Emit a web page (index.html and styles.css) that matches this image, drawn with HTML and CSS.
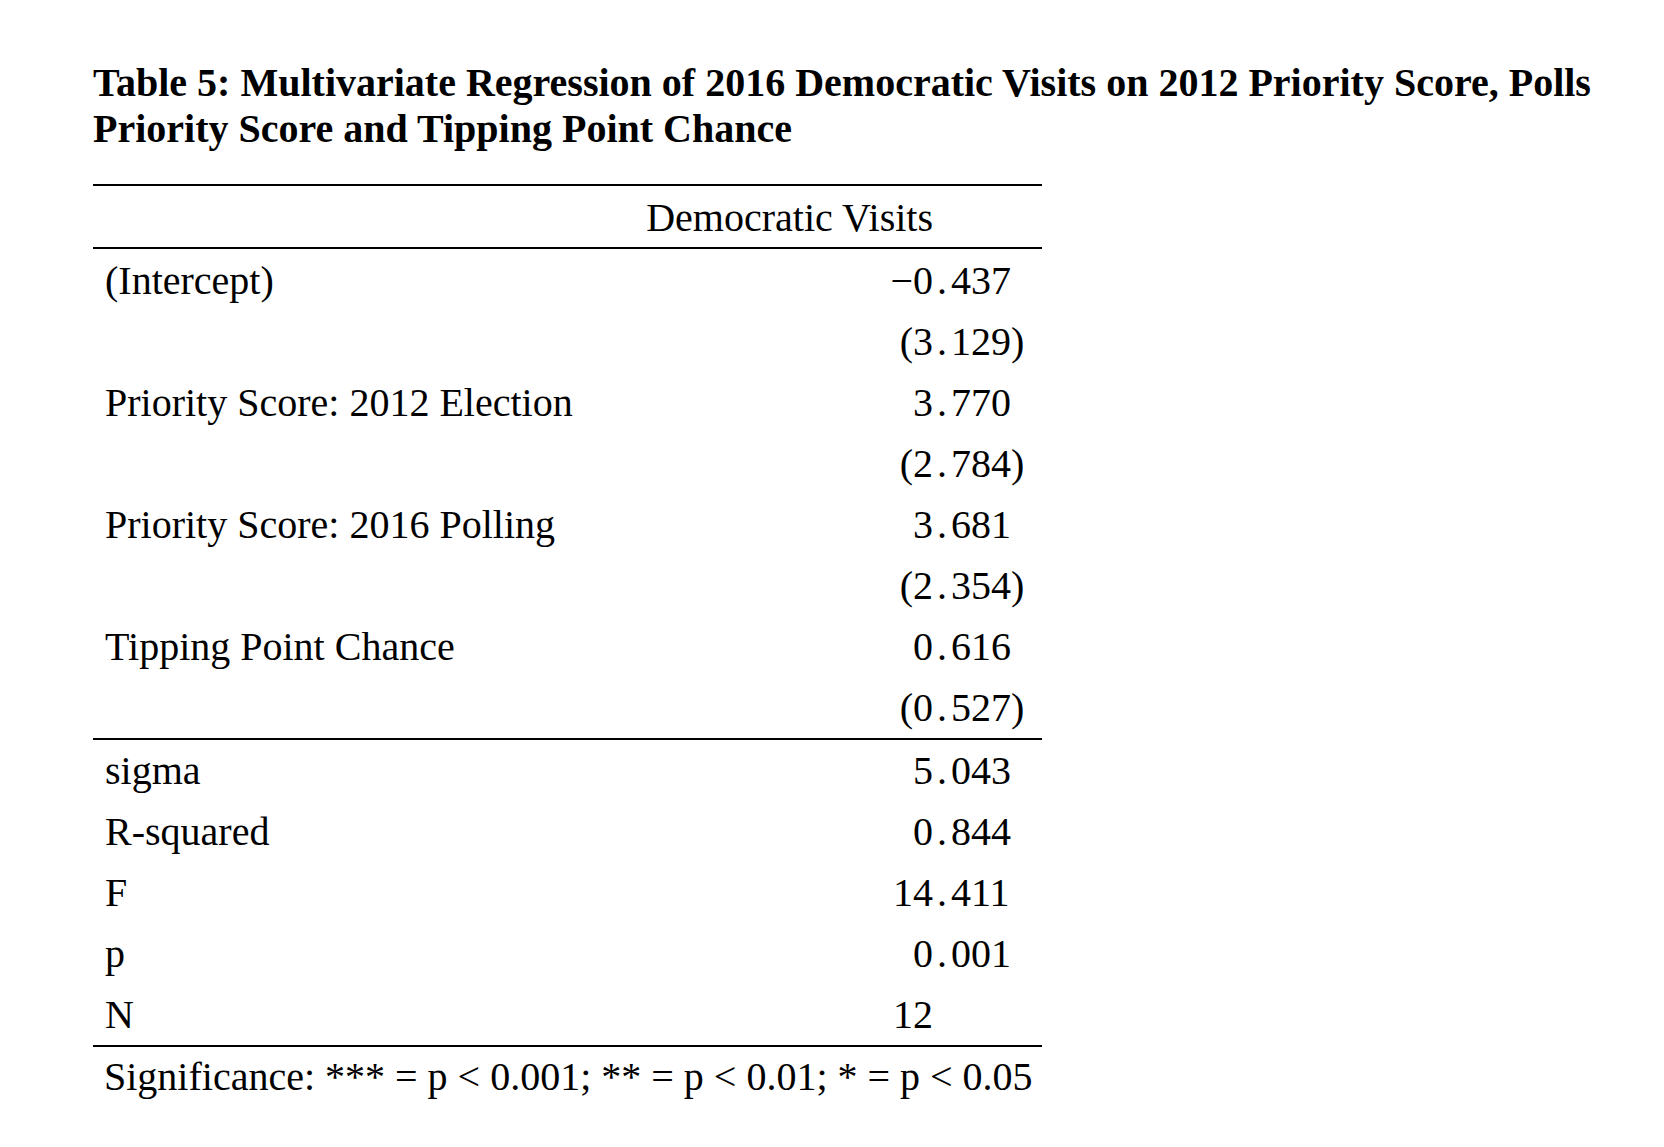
FILE: index.html
```html
<!DOCTYPE html>
<html lang="en">
<head>
<meta charset="utf-8">
<title>Table 5</title>
<link rel="stylesheet" href="styles.css">
</head>
<body>
<div class="page">
  <h1 class="caption">Table 5: Multivariate Regression of 2016 Democratic Visits on 2012 Priority Score, Polls Priority Score and Tipping Point Chance</h1>
  <div class="reg">
    <div class="head">
      <div class="hcell">Democratic Visits</div>
    </div>
    <div class="section coefs">
      <div class="row"><div class="lab">(Intercept)</div><div class="num"><span class="int">&minus;0</span><span class="dot">.</span><span class="frac">437</span></div></div>
      <div class="row"><div class="lab"></div><div class="num"><span class="int">(3</span><span class="dot">.</span><span class="frac">129)</span></div></div>
      <div class="row"><div class="lab">Priority Score: 2012 Election</div><div class="num"><span class="int">3</span><span class="dot">.</span><span class="frac">770</span></div></div>
      <div class="row"><div class="lab"></div><div class="num"><span class="int">(2</span><span class="dot">.</span><span class="frac">784)</span></div></div>
      <div class="row"><div class="lab">Priority Score: 2016 Polling</div><div class="num"><span class="int">3</span><span class="dot">.</span><span class="frac">681</span></div></div>
      <div class="row"><div class="lab"></div><div class="num"><span class="int">(2</span><span class="dot">.</span><span class="frac">354)</span></div></div>
      <div class="row"><div class="lab">Tipping Point Chance</div><div class="num"><span class="int">0</span><span class="dot">.</span><span class="frac">616</span></div></div>
      <div class="row"><div class="lab"></div><div class="num"><span class="int">(0</span><span class="dot">.</span><span class="frac">527)</span></div></div>
    </div>
    <div class="section stats">
      <div class="row"><div class="lab">sigma</div><div class="num"><span class="int">5</span><span class="dot">.</span><span class="frac">043</span></div></div>
      <div class="row"><div class="lab">R-squared</div><div class="num"><span class="int">0</span><span class="dot">.</span><span class="frac">844</span></div></div>
      <div class="row"><div class="lab">F</div><div class="num"><span class="int">14</span><span class="dot">.</span><span class="frac">411</span></div></div>
      <div class="row"><div class="lab">p</div><div class="num"><span class="int">0</span><span class="dot">.</span><span class="frac">001</span></div></div>
      <div class="row"><div class="lab">N</div><div class="num"><span class="int">12</span></div></div>
    </div>
    <div class="foot">Significance: *** = p &lt; 0.001; ** = p &lt; 0.01; * = p &lt; 0.05</div>
  </div>
</div>
</body>
</html>
```

FILE: styles.css
```css
html, body {
  margin: 0;
  padding: 0;
  background: #ffffff;
}

body {
  font-family: "Liberation Serif", "Times New Roman", serif;
  color: #000000;
}

.page {
  padding: 60px 40px 0 93px;
}

.caption {
  margin: 0;
  font-size: 40px;
  line-height: 46px;
  font-weight: bold;
}

.reg {
  width: 949px;
  margin-top: 32px;
  border-top: 2px solid #000;
  font-size: 40px;
}

.head {
  height: 59px;
  padding-top: 2px;
  line-height: 60px;
  border-bottom: 2px solid #000;
  display: flex;
}

.hcell {
  width: 840px;
  text-align: right;
  white-space: nowrap;
}

.section {
  border-bottom: 2px solid #000;
}

.coefs {
  padding-top: 1px;
}

.stats {
  padding-top: 0;
}

.row {
  display: flex;
  height: 61px;
  line-height: 61px;
  white-space: nowrap;
}

.stats .row {
  line-height: 62px;
}

.lab {
  flex: 0 0 728px;
  padding-left: 12px;
}

.num {
  display: flex;
}

.int {
  width: 100px;
  text-align: right;
}

.dot {
  margin: 0 4px;
}

.foot {
  height: 61px;
  line-height: 60px;
  padding-left: 11px;
  white-space: nowrap;
}
```
